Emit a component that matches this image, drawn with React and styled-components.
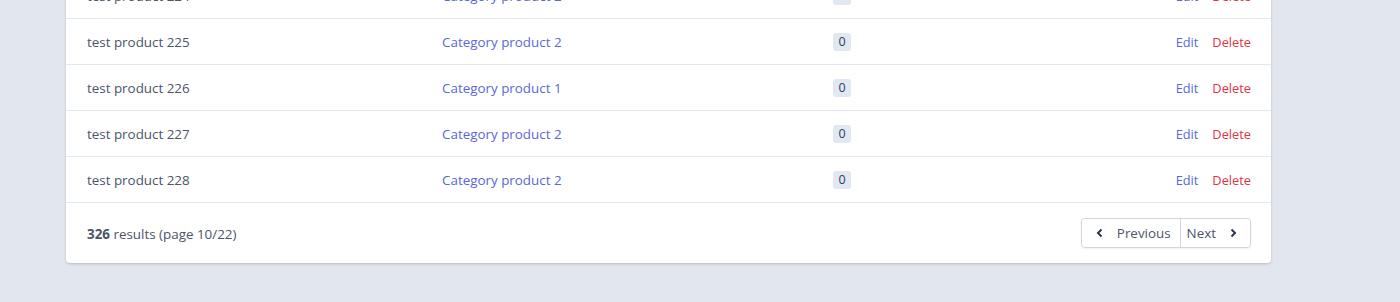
import React from "react";
import styled, { createGlobalStyle } from "styled-components";

const Global = createGlobalStyle`
  html, body { margin: 0; padding: 0; background: #e2e6ee; }
  body { font-family: "Open Sans", "Noto Sans", sans-serif; font-size: 13.4px; color: #4a5568; overflow: hidden; }
`;

const Page = styled.div`
  padding: 0 129px 0 66px;
  margin-top: -27px;
  height: 330px;
`;

const Card = styled.div`
  background: #fff;
  border-radius: 0 0 4px 4px;
  box-shadow: 0 1px 3px rgba(0,0,0,0.12), 0 1px 2px rgba(0,0,0,0.08);
`;

const Row = styled.div`
  display: grid;
  grid-template-columns: 355px 391px 1fr auto;
  align-items: center;
  height: 45px;
  padding: 0 20px 0 21px;
  border-bottom: 1px solid #e2e8f0;
`;

const Name = styled.div`
  color: #4a5568;
`;

const CatLink = styled.a`
  color: #5a67d8;
  text-decoration: none;
`;

const Badge = styled.span`
  display: inline-flex;
  align-items: center;
  justify-content: center;
  width: 18px;
  height: 18px;
  border-radius: 3px;
  background: #e2e8f0;
  color: #2c3e6b;
  font-size: 12.5px;
`;

const Actions = styled.div`
  display: flex;
  gap: 14px;
  font-size: 12.8px;
`;

const Action = styled.a`
  color: ${(p) => (p.$danger ? "#dc3545" : "#5a67d8")};
  text-decoration: none;
`;

const Footer = styled.div`
  display: flex;
  align-items: center;
  justify-content: space-between;
  height: 60px;
  padding: 0 20px 0 21px;
`;

const Summary = styled.div`
  margin-top: 2px;
  b { font-weight: 700; color: #4a5568; }
`;

const Pager = styled.div`
  display: flex;
  border: 1px solid #d2d6dc;
  border-radius: 4px;
  box-shadow: 0 1px 2px rgba(0,0,0,0.06);
  height: 28px;
`;

const PageBtn = styled.button`
  display: flex;
  align-items: center;
  gap: 13px;
  border: none;
  background: #fff;
  font: inherit;
  color: #4a5568;
  padding: ${(p) => (p.$next ? "0 13px 0 6px" : "0 9px 0 14px")};
  border-left: ${(p) => (p.$next ? "1px solid #d2d6dc" : "none")};
  border-radius: ${(p) => (p.$next ? "0 4px 4px 0" : "4px 0 0 4px")};
  cursor: pointer;
`;

const Chevron = ({ dir }) => (
  <svg width="8" height="10" viewBox="0 0 8 10">
    <path
      d={dir === "left" ? "M5.5 1.5 L2 5 L5.5 8.5" : "M2.5 1.5 L6 5 L2.5 8.5"}
      fill="none"
      stroke="#2d3748"
      strokeWidth="2"
    />
  </svg>
);

const rows = [
  ["test product 224", "Category product 2"],
  ["test product 225", "Category product 2"],
  ["test product 226", "Category product 1"],
  ["test product 227", "Category product 2"],
  ["test product 228", "Category product 2"],
];

export default function App() {
  return (
    <>
      <Global />
      <Page>
        <Card>
          {rows.map(([n, c]) => (
            <Row key={n}>
              <Name>{n}</Name>
              <div><CatLink href="#">{c}</CatLink></div>
              <div><Badge>0</Badge></div>
              <Actions>
                <Action href="#">Edit</Action>
                <Action href="#" $danger>Delete</Action>
              </Actions>
            </Row>
          ))}
          <Footer>
            <Summary><b>326</b> results (page 10/22)</Summary>
            <Pager>
              <PageBtn><Chevron dir="left" /> Previous</PageBtn>
              <PageBtn $next>Next <Chevron dir="right" /></PageBtn>
            </Pager>
          </Footer>
        </Card>
      </Page>
    </>
  );
}
